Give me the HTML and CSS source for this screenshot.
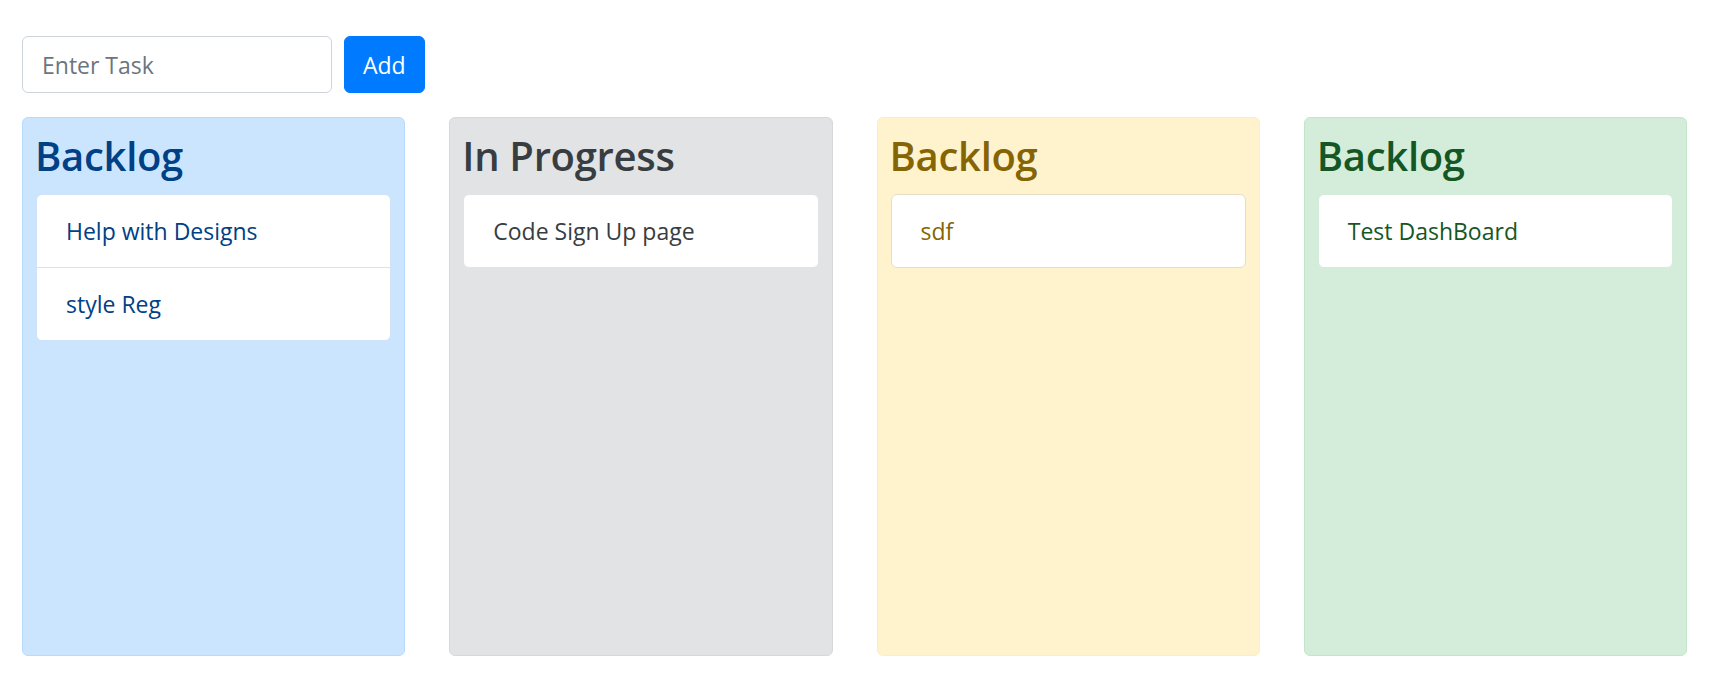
FILE: index.html
```html
<!DOCTYPE html>
<html lang="en">
<head>
<meta charset="utf-8">
<title>Task Board</title>
<link rel="stylesheet" href="styles.css">
</head>
<body>
<div class="page">
  <form class="add-form">
    <input class="task-input" type="text" placeholder="Enter Task">
    <button class="add-btn" type="button">Add</button>
  </form>
  <div class="board">
    <section class="lane lane-blue">
      <h3 class="lane-title">Backlog</h3>
      <ul class="task-list">
        <li class="task">Help with Designs</li>
        <li class="task">style Reg</li>
      </ul>
    </section>
    <section class="lane lane-gray">
      <h3 class="lane-title">In Progress</h3>
      <ul class="task-list">
        <li class="task">Code Sign Up page</li>
      </ul>
    </section>
    <section class="lane lane-yellow">
      <h3 class="lane-title">Backlog</h3>
      <ul class="task-list">
        <li class="task">sdf</li>
      </ul>
    </section>
    <section class="lane lane-green">
      <h3 class="lane-title">Backlog</h3>
      <ul class="task-list">
        <li class="task">Test DashBoard</li>
      </ul>
    </section>
  </div>
</div>
</body>
</html>
```
FILE: styles.css
```css
* { box-sizing: border-box; }
html, body { margin: 0; padding: 0; background: #fff; }
body {
  font-family: "Open Sans", "Noto Sans", sans-serif;
  font-size: 23px;
  color: #212529;
}
.page { padding: 36px 34px 0 22px; }
.add-form { display: flex; gap: 12px; align-items: stretch; }
.task-input {
  width: 310px;
  height: 57px;
  padding: 0 19px;
  font: inherit;
  font-size: 23px;
  color: #495057;
  border: 1px solid #ced4da;
  border-radius: 6px;
  background: #fff;
  outline: none;
}
.task-input::placeholder { color: #6c757d; }
.add-btn {
  height: 57px;
  padding: 0 18px;
  font: inherit;
  font-size: 23px;
  color: #fff;
  background: #007bff;
  border: 1px solid #007bff;
  border-radius: 6px;
}
.board {
  margin-top: 24px;
  display: grid;
  grid-template-columns: repeat(4, 1fr);
  gap: 44px;
}
.lane {
  height: 539px;
  border: 1px solid;
  border-radius: 6px;
  padding: 12px 13px;
}
.lane-title {
  margin: 0 0 12px -1px;
  font-size: 40px;
  line-height: 52px;
  font-weight: 600;
  letter-spacing: -0.3px;
}
.task-list {
  list-style: none;
  margin: 0;
  padding: 0;
  background: #fff;
  border: 1px solid transparent;
  border-radius: 6px;
  overflow: hidden;
}
.task {
  padding: 18px 30px 18px 29px;
  line-height: 36px;
}
.task + .task { border-top: 1px solid #dee2e6; }
.lane-blue { background: #cce5ff; border-color: #b8daff; color: #004085; }
.lane-blue .task-list { border-color: #cfe3f8; }
.lane-gray { background: #e2e3e5; border-color: #d6d8db; color: #383d41; }
.lane-gray .task-list { border-color: #e2e3e5; }
.lane-yellow { background: #fff3cd; border-color: #ffeeba; color: #856404; }
.lane-yellow .task-list { border-color: #e4dec9; }
.lane-green { background: #d4edda; border-color: #c3e6cb; color: #155724; }
.lane-green .task-list { border-color: #d4edda; }
```
